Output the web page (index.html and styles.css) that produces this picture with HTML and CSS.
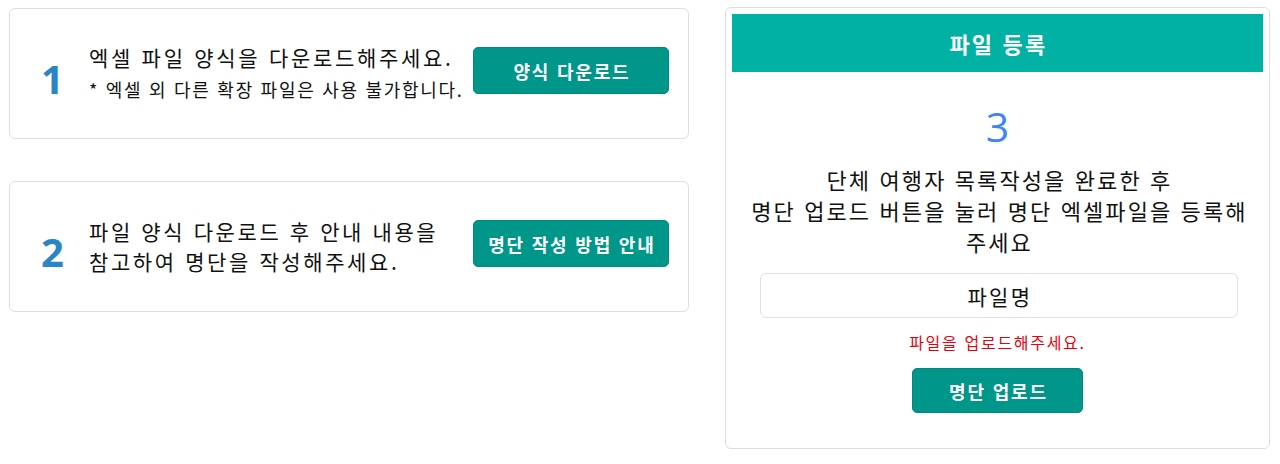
FILE: index.html
```html
<!DOCTYPE html>
<html lang="ko">
<head>
<meta charset="utf-8">
<title>단체 명단 등록</title>
<link rel="stylesheet" href="styles.css">
</head>
<body>
<div class="page">
  <div class="left">
    <div class="card step">
      <div class="num">1</div>
      <div class="txt">
        <p class="main">엑셀 파일 양식을 다운로드해주세요.</p>
        <p class="sub">* 엑셀 외 다른 확장 파일은 사용 불가합니다.</p>
      </div>
      <button class="btn">양식 다운로드</button>
    </div>
    <div class="card step">
      <div class="num">2</div>
      <div class="txt">
        <p class="main two">파일 양식 다운로드 후 안내 내용을<br>참고하여 명단을 작성해주세요.</p>
      </div>
      <button class="btn">명단 작성 방법 안내</button>
    </div>
  </div>
  <div class="card upload">
    <div class="head">파일 등록</div>
    <div class="body">
      <div class="num3">3</div>
      <p class="desc">단체 여행자 목록작성을 완료한 후<br>명단 업로드 버튼을 눌러 명단 엑셀파일을 등록해<br>주세요</p>
      <div class="file">파일명</div>
      <p class="err">파일을 업로드해주세요.</p>
      <button class="btn up">명단 업로드</button>
    </div>
  </div>
</div>
</body>
</html>
```
FILE: styles.css
```css
* { box-sizing: border-box; }
body {
  margin: 0;
  background: #fff;
  font-family: "Noto Sans CJK KR", "Noto Sans", sans-serif;
  color: #111;
}
p { margin: 0; }
.page {
  display: flex;
  gap: 36px;
  padding: 7px 10px 0 9px;
  width: 1280px;
}
.left {
  width: 681px;
  display: flex;
  flex-direction: column;
  gap: 42px;
  padding-top: 1px;
}
.card {
  border: 1px solid #dedede;
  border-radius: 6px;
  background: #fff;
}
.step {
  height: 131px;
  display: flex;
  align-items: center;
  padding: 0 19px 0 31px;
}
.num {
  width: 48px;
  font-family: "Open Sans", "Noto Sans", sans-serif;
  font-weight: 700;
  font-size: 40px;
  color: #2a85c6;
  line-height: 1;
  padding-top: 10px;
}
.txt { flex: 1; padding-bottom: 4px; white-space: nowrap; }
.main { font-size: 21px; line-height: 30px; letter-spacing: 2.7px; }
.main.two { padding-top: 2px; letter-spacing: 2.6px; }
.sub { font-size: 18px; line-height: 26px; margin-top: 4px; letter-spacing: 1.7px; }
.btn {
  width: 196px;
  height: 47px;
  flex-shrink: 0;
  border: 1px solid #00897d;
  border-radius: 5px;
  background: #009689;
  color: #fff;
  font-family: "Noto Sans CJK KR", "Noto Sans", sans-serif;
  font-weight: 700;
  font-size: 18px;
  letter-spacing: 1.8px;
  padding: 0 0 0 2px;
  margin-top: -6px;
}
.upload {
  width: 546px;
  height: 442px;
  padding: 6px;
  display: flex;
  flex-direction: column;
}
.head {
  height: 58px;
  flex-shrink: 0;
  background: #01b1a3;
  color: #fff;
  font-weight: 700;
  font-size: 22px;
  letter-spacing: 2.2px;
  padding-left: 2px;
  display: flex;
  align-items: center;
  justify-content: center;
}
.body {
  display: flex;
  flex-direction: column;
  align-items: center;
  padding: 32px 0 0;
}
.num3 {
  font-family: "Open Sans", "Noto Sans", sans-serif;
  font-weight: 500;
  font-size: 41px;
  color: #3b86f2;
  line-height: 44px;
}
.desc {
  font-size: 22px;
  line-height: 31px;
  letter-spacing: 2.1px;
  text-align: center;
  white-space: nowrap;
  margin-top: 16px;
  padding-left: 4px;
}
.file {
  width: 478px;
  height: 45px;
  margin-top: 16px;
  margin-left: 3px;
  border: 1px solid #e0e0e0;
  border-radius: 6px;
  display: flex;
  align-items: center;
  justify-content: center;
  font-size: 21px;
  letter-spacing: 2.3px;
  padding-left: 2px;
}
.err {
  color: #e8000b;
  font-size: 16px;
  line-height: 24px;
  letter-spacing: 1.7px;
  margin-top: 12px;
}
.btn.up {
  width: 171px;
  height: 45px;
  margin-top: 14px;
}
```
